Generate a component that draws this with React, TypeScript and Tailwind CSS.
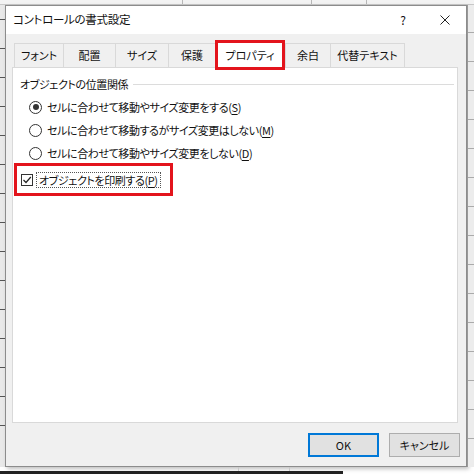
import React from "react"

const tabs = [
  { label: "フォント", w: "w-[49px]" },
  { label: "配置", w: "w-[52px]" },
  { label: "サイズ", w: "w-[53px]" },
  { label: "保護", w: "w-[47px]" },
  { label: "プロパティ", w: "w-[70px]", active: true },
  { label: "余白", w: "w-[45px]" },
  { label: "代替テキスト", w: "w-[75px]" },
]

const radios = [
  { text: "セルに合わせて移動やサイズ変更をする", key: "S", checked: true },
  { text: "セルに合わせて移動するがサイズ変更はしない", key: "M" },
  { text: "セルに合わせて移動やサイズ変更をしない", key: "D" },
]

function Radio({ checked }: { checked?: boolean }) {
  return (
    <span className="flex h-[13px] w-[13px] shrink-0 items-center justify-center rounded-full border border-[#333] bg-white">
      {checked && <span className="h-[6px] w-[6px] rounded-full bg-[#333]" />}
    </span>
  )
}

export default function App() {
  return (
    <div className="flex h-[474px] w-[474px] flex-col overflow-hidden bg-white text-[11px] text-[#111] [font-family:'Noto_Sans_CJK_JP','Noto_Sans',sans-serif] [font-feature-settings:'palt']">
      {/* sheet header strip */}
      <div className="flex h-[5px] shrink-0 border-b border-[#c8c8c8] bg-[#f3f3f3]">
        <div className="w-[183px] border-r border-[#b8b8b8]" />
        <div className="w-[129px] border-r border-[#b8b8b8]" />
        <div className="w-[55px] border-r border-[#b8b8b8]" />
      </div>

      <div className="flex h-[462px] shrink-0">
        {/* row headers */}
        <div className="w-[5px] shrink-0 bg-[#e9e9e9] [background-image:repeating-linear-gradient(to_bottom,transparent_0,transparent_28px,#555_28px,#555_29px)] [background-position:0_-14px]" />

        {/* dialog */}
        <div className="flex w-[462px] shrink-0 flex-col border border-[#8c8c8c] bg-[#f0f0f0] shadow-[2px_2px_4px_rgba(0,0,0,0.25)]">
          {/* title bar */}
          <div className="flex h-[28px] shrink-0 items-center bg-white pl-[7px]">
            <span className="text-[11.5px] tracking-[-0.3px]">コントロールの書式設定</span>
            <span className="ml-auto mr-[34px] text-[12px]">?</span>
            <svg width="10" height="10" viewBox="0 0 10 10" className="mr-[16px]">
              <path d="M0.5 0.5 L9.5 9.5 M9.5 0.5 L0.5 9.5" stroke="#222" strokeWidth="1" />
            </svg>
          </div>

          {/* tabs */}
          <div className="mt-[7px] flex h-[26px] shrink-0 items-end pl-[8px]">
            {tabs.map((t) =>
              t.active ? (
                <div
                  key={t.label}
                  className={`relative z-10 -mb-px flex h-[27px] ${t.w} items-center justify-center border border-b-0 border-[#d9d9d9] bg-white`}
                >
                  <span className="pt-[1px]">{t.label}</span>
                  <div className="absolute -top-[2px] -left-[1px] -right-[1px] -bottom-[2px] border-[3px] border-[#e3141c]" />
                </div>
              ) : (
                <div
                  key={t.label}
                  className={`flex h-[24px] ${t.w} items-center justify-center border border-b-0 border-r-0 border-[#d9d9d9] last:border-r`}
                >
                  {t.label}
                </div>
              )
            )}
          </div>

          {/* panel */}
          <div className="ml-[6px] flex h-[356px] w-[446px] shrink-0 flex-col border border-[#d9d9d9] bg-white tracking-[-0.4px]">
            <div className="mt-[8px] flex items-center pl-[7px]">
              <span>オブジェクトの位置関係</span>
              <div className="ml-[5px] mr-[3px] h-px flex-1 bg-[#dcdcdc]" />
            </div>

            <div className="mt-[8px] flex flex-col gap-[10px] pl-[16px]">
              {radios.map((r) => (
                <div key={r.key} className="flex h-[13px] items-center gap-[5px]">
                  <Radio checked={r.checked} />
                  <span>
                    {r.text}(<span className="underline underline-offset-2">{r.key}</span>)
                  </span>
                </div>
              ))}
            </div>

            {/* print checkbox */}
            <div className="relative ml-[8px] mt-[12px] flex h-[16px] w-fit items-center">
              <span className="flex h-[12px] w-[12px] items-center justify-center border border-[#333] bg-white">
                <svg width="10" height="10" viewBox="0 0 10 10">
                  <path d="M1.5 5 L4 7.5 L8.8 2" fill="none" stroke="#222" strokeWidth="1.2" />
                </svg>
              </span>
              <span className="ml-[3px] border border-dotted border-[#555] px-[2px] leading-[14px]">
                オブジェクトを印刷する(<span className="underline underline-offset-2">P</span>)
              </span>
              <div className="absolute -top-[9px] -left-[7px] -right-[12px] -bottom-[8px] border-[3px] border-[#e3141c]" />
            </div>
          </div>

          {/* buttons */}
          <div className="mt-[10px] flex shrink-0 justify-end gap-[10px] pr-[6px]">
            <button className="flex h-[24px] w-[71px] items-center justify-center border border-[#0078d7] bg-[#e1e1e1] shadow-[inset_0_0_0_1px_#0078d7]">
              OK
            </button>
            <button className="flex h-[24px] w-[71px] items-center justify-center border border-[#adadad] bg-[#e1e1e1]">
              キャンセル
            </button>
          </div>
        </div>

        {/* right sheet column */}
        <div className="w-[7px] shrink-0 border-l border-[#999] bg-[#ececec] [background-image:repeating-linear-gradient(to_bottom,transparent_0,transparent_28px,#aaa_28px,#aaa_29px)] [background-position:0_-1px]" />
      </div>

      {/* bottom sheet strip */}
      <div className="flex flex-1 flex-col">
        <div className="flex flex-1">
          <div className="w-[239px] border-r border-[#c8c8c8]" />
          <div className="w-[51px] border-r border-[#c8c8c8]" />
        </div>
        <div className="h-[3px] w-[343px] bg-[#222]" />
      </div>
    </div>
  )
}
